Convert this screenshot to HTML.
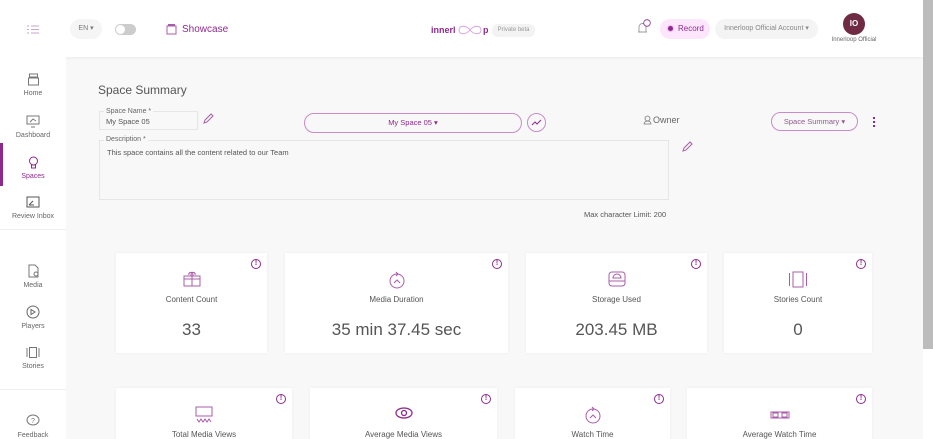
<!DOCTYPE html>
<html><head><meta charset="utf-8"><style>
*{box-sizing:border-box;margin:0;padding:0}
html,body{width:933px;height:439px;overflow:hidden}
body{background:#f8f8f8;font-family:"Liberation Sans",sans-serif;color:#555;position:relative}
.a{position:absolute}
.hdr{left:0;top:0;width:923px;height:57px;background:#fff;box-shadow:0 1px 3px rgba(0,0,0,.06)}
.side{left:0;top:57px;width:66px;height:382px;background:#fff}
.nav{position:absolute;left:0;width:66px;text-align:center;font-size:7px;color:#666}
.nav svg{display:block;margin:0 auto 4px}
.card{position:absolute;background:#fff;box-shadow:0 0 3px rgba(0,0,0,.05);text-align:center}
.card .t{position:absolute;left:0;right:0;top:42px;font-size:8px;color:#555}
.card .v{position:absolute;left:0;right:0;top:67px;font-size:17px;color:#555}
.card .ic{position:absolute;left:50%;top:18px;transform:translateX(-50%)}
.info{position:absolute;right:6px;top:6px;width:10px;height:10px;border:1.2px solid #8e2a8e;border-radius:50%;font-size:7px;line-height:8px;color:#8e2a8e;text-align:center;font-weight:bold}
.pill{position:absolute;border:1px solid #c98bc9;border-radius:12px;font-size:7.5px;color:#8e2a8e;text-align:center}
</style></head><body>
<div class="a hdr"></div>
<svg class="a" style="left:27px;top:25px" width="12" height="9"><g stroke="#c9a6c9" stroke-width="1"><line x1="0" y1="1" x2="2" y2="1"/><line x1="4" y1="1" x2="12" y2="1"/><line x1="0" y1="4.5" x2="2" y2="4.5"/><line x1="4" y1="4.5" x2="12" y2="4.5"/><line x1="0" y1="8" x2="2" y2="8"/><line x1="4" y1="8" x2="12" y2="8"/></g></svg>
<div class="a" style="left:70px;top:19px;width:32px;height:20px;border-radius:10px;background:#f5f5f5;font-size:7px;line-height:20px;text-align:center;color:#777">EN ▾</div>
<div class="a" style="left:115px;top:24px;width:21px;height:11px;border-radius:6px;background:#ccc"><div style="position:absolute;left:1px;top:1px;width:9px;height:9px;border-radius:50%;background:#fff"></div></div>
<svg class="a" style="left:166px;top:23px" width="11" height="12"><rect x="1" y="3" width="9" height="8" fill="none" stroke="#a85ca8"/><rect x="2" y="1" width="7" height="2" fill="#a85ca8"/></svg>
<div class="a" style="left:182px;top:24px;font-size:10px;color:#8e2a8e">Showcase</div>
<div class="a" style="left:431px;top:25px;font-size:9px;font-weight:bold;color:#8e2a8e">innerl</div>
<svg class="a" style="left:457px;top:24px" width="26" height="12"><path d="M2 6C2 1 9 1 13 6S24 11 24 6 17 1 13 6 2 11 2 6" fill="none" stroke="#d6a6e0" stroke-width="1"/></svg>
<div class="a" style="left:483px;top:25px;font-size:9px;font-weight:bold;color:#8e2a8e">p</div>
<div class="a" style="left:492px;top:24px;width:43px;height:13px;border-radius:6px;background:#f3f3f3;font-size:6px;line-height:13px;text-align:center;color:#999">Private beta</div>
<svg class="a" style="left:636px;top:19px" width="16" height="15"><path d="M2 13h9M3 13V8a3.5 3.5 0 0 1 7 0v5" fill="none" stroke="#999" stroke-width=".9"/><circle cx="11" cy="4" r="3.3" fill="#fff" stroke="#8e2a8e" stroke-width=".8"/></svg>
<div class="a" style="left:660px;top:19px;width:50px;height:20px;border-radius:10px;background:#fbe6fb;font-size:8px;line-height:20px;color:#8e2a8e"><span style="display:inline-block;width:7px;height:7px;border-radius:50%;background:#8e2a8e;border:1px solid #f6b8f6;margin:0 4px 0 7px;vertical-align:-1px"></span>Record</div>
<div class="a" style="left:715px;top:19px;width:103px;height:20px;border-radius:10px;background:#f4f4f4;font-size:7px;line-height:20px;text-align:center;color:#888">Innerloop Official Account ▾</div>
<div class="a" style="left:843px;top:13px;width:22px;height:22px;border-radius:50%;background:#6e2b43;color:#fff;font-size:8px;font-weight:bold;line-height:22px;text-align:center">IO</div>
<div class="a" style="left:824px;top:37px;width:60px;font-size:6px;text-align:center;color:#666">Innerloop Official</div>
<div class="a" style="left:923px;top:0;width:10px;height:349px;background:#bcbcbc"></div>
<div class="a" style="left:923px;top:349px;width:10px;height:90px;background:#fff"></div>
<div class="a side"></div>
<div class="a" style="left:0;top:143px;width:3px;height:43px;background:#8e2a8e"></div>
<div class="nav" style="top:73px"><svg width="13" height="13"><rect x="1.5" y="5" width="10" height="7" fill="none" stroke="#777"/><rect x="2.5" y="1" width="8" height="3" fill="none" stroke="#777"/></svg>Home</div>
<div class="nav" style="top:115px"><svg width="14" height="13"><rect x="1" y="1" width="12" height="8" fill="none" stroke="#777"/><path d="M4 7l3-3 3 2M5 12h4" stroke="#777" fill="none"/></svg>Dashboard</div>
<div class="nav" style="top:156px;color:#8e2a8e"><svg width="13" height="13"><circle cx="6.5" cy="5" r="4" fill="none" stroke="#8e2a8e"/><rect x="4.5" y="9" width="4" height="3" fill="none" stroke="#8e2a8e"/></svg>Spaces</div>
<div class="nav" style="top:196px"><svg width="14" height="13"><rect x="1" y="1" width="12" height="10" fill="none" stroke="#555"/><path d="M3 9l4-4M3 9h5" stroke="#555"/></svg>Review Inbox</div>
<div class="a" style="left:0;top:229px;width:66px;height:1px;background:#f0f0f0"></div>
<div class="nav" style="top:264px"><svg width="13" height="14"><path d="M2 1h6l3 3v9H2z" fill="none" stroke="#777"/><circle cx="9" cy="10" r="2" fill="none" stroke="#777"/></svg>Media</div>
<div class="nav" style="top:305px"><svg width="14" height="14"><circle cx="7" cy="7" r="6" fill="none" stroke="#666"/><path d="M5 4.5v5l4-2.5z" fill="none" stroke="#666"/></svg>Players</div>
<div class="nav" style="top:346px"><svg width="14" height="13"><rect x="3.5" y="1.5" width="7" height="10" fill="none" stroke="#777"/><path d="M1 2v9M13 2v9" stroke="#777"/></svg>Stories</div>
<div class="a" style="left:0;top:389px;width:66px;height:1px;background:#f0f0f0"></div>
<div class="nav" style="top:414px"><svg width="14" height="14"><ellipse cx="7" cy="6" rx="6" ry="5" fill="none" stroke="#777"/><text x="5" y="9" font-size="7" fill="#777">?</text></svg>Feedback</div>
<div class="a" style="left:98px;top:83px;font-size:12px;color:#555">Space Summary</div>
<div class="a" style="left:99px;top:111px;width:99px;height:19px;border:1px solid #e6e6e6"></div>
<div class="a" style="left:104px;top:108px;font-size:7px;background:#f8f8f8;padding:0 2px;color:#666">Space Name *</div>
<div class="a" style="left:106px;top:117px;font-size:7.5px;color:#555">My Space 05</div>
<svg class="a" style="left:202px;top:113px" width="12" height="12"><path d="M2 10l1-3 6-6 2 2-6 6z" fill="none" stroke="#a85ca8"/></svg>
<div class="a" style="left:99px;top:140px;width:570px;height:60px;border:1px solid #e6e6e6"></div>
<div class="a" style="left:104px;top:136px;font-size:7px;background:#f8f8f8;padding:0 2px;color:#666">Description *</div>
<div class="a" style="left:107px;top:148px;font-size:7.5px;color:#555">This space contains all the content related to our Team</div>
<svg class="a" style="left:681px;top:141px" width="12" height="12"><path d="M2 10l1-3 6-6 2 2-6 6z" fill="none" stroke="#a85ca8"/></svg>
<div class="pill" style="left:304px;top:113px;width:218px;height:20px;line-height:18px;border-radius:10px">My Space 05 ▾</div>
<div class="a" style="left:527px;top:113px;width:19px;height:19px;border:1px solid #c98bc9;border-radius:50%"></div>
<svg class="a" style="left:531px;top:118px" width="11" height="9"><path d="M1 7l3-3 2 2 4-4" fill="none" stroke="#8e2a8e"/></svg>
<svg class="a" style="left:643px;top:115px" width="9" height="10"><circle cx="4.5" cy="3.5" r="2.5" fill="none" stroke="#777" stroke-width=".8"/><path d="M1 9a3.5 3 0 0 1 7 0z" fill="none" stroke="#777" stroke-width=".8"/></svg>
<div class="a" style="left:653px;top:115px;font-size:9px;color:#666">Owner</div>
<div class="pill" style="left:771px;top:112px;width:87px;height:19px;line-height:17px;border-radius:10px;color:#8e5a8e">Space Summary ▾</div>
<div class="a" style="left:873px;top:117px;width:2px;height:10px;background:repeating-linear-gradient(#8e2a8e 0 2px,transparent 2px 4px)"></div>
<div class="a" style="left:584px;top:210px;font-size:7.5px;color:#555">Max character Limit: 200</div>
<div class="card" style="left:116px;top:253px;width:151px;height:100px"><div class="info">!</div><svg class="ic" width="18" height="16"><rect x="1" y="5" width="16" height="10" fill="none" stroke="#a85ca8"/><path d="M1 8h16M9 5v10M6 4a2 2 0 1 1 3 1 2 2 0 1 1 3-1" fill="none" stroke="#a85ca8"/></svg><div class="t">Content Count</div><div class="v">33</div></div>
<div class="card" style="left:285px;top:253px;width:223px;height:100px"><div class="info">!</div><svg class="ic" width="18" height="18"><circle cx="9" cy="10" r="7" fill="none" stroke="#a85ca8"/><path d="M6 12l3-3 3 3M8 1l2 2-2 2" fill="none" stroke="#a85ca8"/></svg><div class="t">Media Duration</div><div class="v">35 min 37.45 sec</div></div>
<div class="card" style="left:526px;top:253px;width:181px;height:100px"><div class="info">!</div><svg class="ic" width="18" height="16"><rect x="1" y="1" width="16" height="14" rx="3" fill="none" stroke="#a85ca8"/><path d="M1 10h16M5 7a3 3 0 0 1 8 0z" fill="none" stroke="#a85ca8"/></svg><div class="t">Storage Used</div><div class="v">203.45 MB</div></div>
<div class="card" style="left:724px;top:253px;width:148px;height:100px"><div class="info">!</div><svg class="ic" width="20" height="17"><rect x="5" y="1" width="10" height="15" fill="none" stroke="#a85ca8"/><path d="M1.5 2v13M18.5 2v13" stroke="#a85ca8"/></svg><div class="t">Stories Count</div><div class="v">0</div></div>
<div class="card" style="left:116px;top:388px;width:176px;height:60px"><div class="info">!</div><svg class="ic" width="20" height="18"><rect x="2" y="1" width="16" height="9" fill="none" stroke="#a85ca8"/><path d="M3 13l2 3 2-3 2 3 2-3 2 3 2-3 2 3" fill="none" stroke="#a85ca8"/></svg><div class="t">Total Media Views</div></div>
<div class="card" style="left:310px;top:388px;width:187px;height:60px"><div class="info">!</div><svg class="ic" width="20" height="14"><ellipse cx="10" cy="7" rx="8" ry="5" fill="none" stroke="#8e2a8e" stroke-width="1.3"/><circle cx="10" cy="7" r="2.5" fill="none" stroke="#8e2a8e" stroke-width="1.3"/></svg><div class="t">Average Media Views</div></div>
<div class="card" style="left:515px;top:388px;width:155px;height:60px"><div class="info">!</div><svg class="ic" width="18" height="18"><circle cx="9" cy="10" r="7" fill="none" stroke="#a85ca8"/><path d="M6 12l3-3 3 3M8 1l2 2-2 2" fill="none" stroke="#a85ca8"/></svg><div class="t">Watch Time</div></div>
<div class="card" style="left:687px;top:388px;width:185px;height:60px"><div class="info">!</div><svg class="ic" width="20" height="10" style="top:22px"><rect x="1" y="2" width="18" height="6" fill="none" stroke="#a85ca8"/><path d="M3 3h5v4H3zM12 3h5v4h-5z" fill="none" stroke="#a85ca8"/></svg><div class="t">Average Watch Time</div></div>
</body></html>
